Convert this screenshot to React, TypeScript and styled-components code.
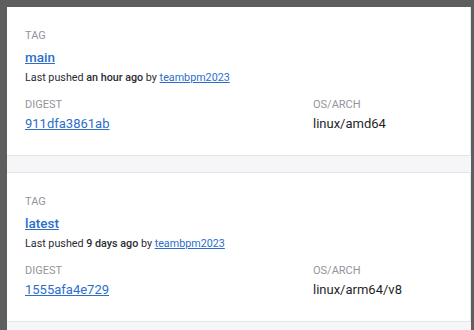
import React from 'react';
import styled, { createGlobalStyle } from 'styled-components';

const GlobalStyle = createGlobalStyle`
  html, body {
    margin: 0;
    padding: 0;
    background: #5e5e5e;
    font-family: Roboto, "Noto Sans", Arial, sans-serif;
  }
`;

interface TagItem {
  name: string;
  pushed: string;
  user: string;
  digest: string;
  arch: string;
}

const TAGS: TagItem[] = [
  { name: 'main', pushed: 'an hour ago', user: 'teambpm2023', digest: '911dfa3861ab', arch: 'linux/amd64' },
  { name: 'latest', pushed: '9 days ago', user: 'teambpm2023', digest: '1555afa4e729', arch: 'linux/arm64/v8' },
];

const Frame = styled.div`
  margin: 7px 3px 0 7px;
  height: 323px;
  background: #f6f6f8;
  overflow: hidden;
  display: flex;
  flex-direction: column;
  gap: 16px;
`;

const Card = styled.section`
  background: #ffffff;
  border-top: 1px solid #e6e6ea;
  border-bottom: 1px solid #e6e6ea;
  border-right: 1px solid #e6e6ea;
  padding: 22px 18px 22px;
  &:first-child {
    border-top: none;
  }
`;

const Label = styled.div`
  color: #94949b;
  font-size: 11px;
  line-height: 14px;
  text-transform: uppercase;
`;

const TagName = styled.a`
  display: inline-block;
  margin-top: 5px;
  color: #2d6ecb;
  font-size: 13.5px;
  font-weight: 500;
  line-height: 18px;
  text-decoration: underline;
`;

const Pushed = styled.div`
  margin-top: 4px;
  color: #2b2b33;
  font-size: 10.75px;
  line-height: 15px;

  b {
    font-weight: 500;
  }
  a {
    color: #2d6ecb;
    text-decoration: underline;
  }
`;

const Details = styled.div`
  margin-top: 13px;
  display: grid;
  grid-template-columns: 288px 1fr;
`;

const Value = styled.div`
  margin-top: 3px;
  color: #1f1f26;
  font-size: 13px;
  line-height: 18px;
`;

const DigestLink = styled.a`
  color: #2d6ecb;
  text-decoration: underline;
`;

const TagCard: React.FC<{ tag: TagItem }> = ({ tag }) => (
  <Card>
    <Label>Tag</Label>
    <TagName>{tag.name}</TagName>
    <Pushed>
      Last pushed <b>{tag.pushed}</b> by <a>{tag.user}</a>
    </Pushed>
    <Details>
      <div>
        <Label>Digest</Label>
        <Value>
          <DigestLink>{tag.digest}</DigestLink>
        </Value>
      </div>
      <div>
        <Label>OS/Arch</Label>
        <Value>{tag.arch}</Value>
      </div>
    </Details>
  </Card>
);

export default function App() {
  return (
    <>
      <GlobalStyle />
      <Frame>
        {TAGS.map(t => (
          <TagCard key={t.name} tag={t} />
        ))}
      </Frame>
    </>
  );
}
